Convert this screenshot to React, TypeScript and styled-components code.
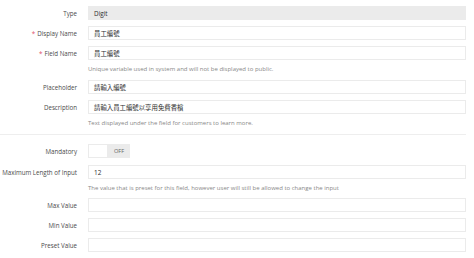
import styled, { createGlobalStyle } from 'styled-components';

const GlobalStyle = createGlobalStyle`
  body {
    margin: 0;
    background: #ffffff;
    font-family: 'Open Sans', 'Noto Sans CJK TC', sans-serif;
  }
`;

const Form = styled.div`
  width: 474px;
  height: 258px;
  overflow: hidden;
  padding-top: 6px;
  box-sizing: border-box;
`;

const Row = styled.div<{ $gap?: number }>`
  display: grid;
  grid-template-columns: 77px 1fr;
  column-gap: 11px;
  padding-right: 8px;
  margin-bottom: ${(p) => p.$gap ?? 6}px;
`;

const Label = styled.div`
  height: 14px;
  display: flex;
  align-items: center;
  justify-content: flex-end;
  font-size: 6.2px;
  color: #4a4a4a;
  white-space: nowrap;
`;

const Required = styled.span`
  color: #e0506a;
  margin-right: 2px;
`;

const Control = styled.div`
  display: flex;
  flex-direction: column;
`;

const Input = styled.div<{ $disabled?: boolean }>`
  height: 14px;
  box-sizing: border-box;
  border: 1px solid ${(p) => (p.$disabled ? '#ebebeb' : '#ebebeb')};
  background: ${(p) => (p.$disabled ? '#ebebeb' : '#ffffff')};
  display: flex;
  align-items: center;
  padding: 0 5px;
  font-size: 6.4px;
  color: #2e2e2e;
  white-space: nowrap;
`;

const Hint = styled.div`
  margin-top: 4px;
  line-height: 10px;
  font-size: 6px;
  color: #888888;
  white-space: nowrap;
`;

const Divider = styled.hr`
  border: 0;
  border-top: 1px solid #eeeeee;
  margin: 0 8px 9px 0;
`;

const Toggle = styled.div`
  display: flex;
  height: 14px;
  width: 42px;
`;

const ToggleKnob = styled.div`
  width: 20px;
  box-sizing: border-box;
  border: 1px solid #ebebeb;
  background: #ffffff;
`;

const ToggleState = styled.div`
  flex: 1;
  background: #ebebeb;
  display: flex;
  align-items: center;
  justify-content: center;
  font-size: 5.6px;
  color: #666666;
`;

export default function App() {
  return (
    <>
      <GlobalStyle />
      <Form>
        <Row>
          <Label>Type</Label>
          <Control>
            <Input $disabled>Digit</Input>
          </Control>
        </Row>
        <Row>
          <Label>
            <Required>*</Required>Display Name
          </Label>
          <Control>
            <Input>員工編號</Input>
          </Control>
        </Row>
        <Row>
          <Label>
            <Required>*</Required>Field Name
          </Label>
          <Control>
            <Input>員工編號</Input>
            <Hint>Unique variable used in system and will not be displayed to public.</Hint>
          </Control>
        </Row>
        <Row>
          <Label>Placeholder</Label>
          <Control>
            <Input>請輸入編號</Input>
          </Control>
        </Row>
        <Row>
          <Label>Description</Label>
          <Control>
            <Input>請輸入員工編號以享用免費香檳</Input>
            <Hint>Text displayed under the field for customers to learn more.</Hint>
          </Control>
        </Row>
        <Divider />
        <Row $gap={7}>
          <Label>Mandatory</Label>
          <Control>
            <Toggle>
              <ToggleKnob />
              <ToggleState>OFF</ToggleState>
            </Toggle>
          </Control>
        </Row>
        <Row $gap={5}>
          <Label>Maximum Length of Input</Label>
          <Control>
            <Input>12</Input>
            <Hint>
              The value that is preset for this field, however user will still be allowed to
              change the input
            </Hint>
          </Control>
        </Row>
        <Row>
          <Label>Max Value</Label>
          <Control>
            <Input />
          </Control>
        </Row>
        <Row>
          <Label>Min Value</Label>
          <Control>
            <Input />
          </Control>
        </Row>
        <Row>
          <Label>Preset Value</Label>
          <Control>
            <Input />
          </Control>
        </Row>
      </Form>
    </>
  );
}
